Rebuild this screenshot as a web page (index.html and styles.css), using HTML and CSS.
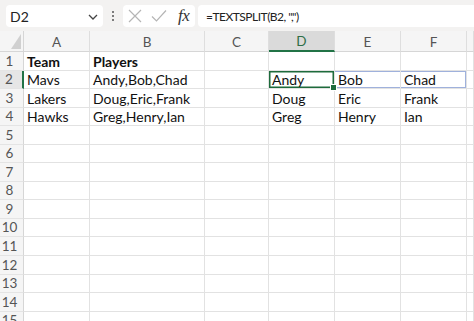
FILE: index.html
```html
<!DOCTYPE html>
<html>
<head>
<meta charset="utf-8">
<link rel="stylesheet" href="styles.css">
</head>
<body>
<div class="app">
  <div class="toolbar">
    <div class="namebox">
      <span class="ref">D2</span>
      <svg class="chev" width="10" height="6" viewBox="0 0 10 6"><path d="M1 1 L5 5 L9 1" fill="none" stroke="#444" stroke-width="1.3"/></svg>
    </div>
    <div class="dots"><i></i><i></i><i></i></div>
    <div class="fxbox">
      <svg width="14" height="14" viewBox="0 0 14 14"><path d="M1 1 L13 13 M13 1 L1 13" stroke="#b5b5b5" stroke-width="1.2" fill="none"/></svg>
      <svg width="16" height="14" viewBox="0 0 16 14"><path d="M1 7.5 L5.5 12 L15 1.5" stroke="#b5b5b5" stroke-width="1.2" fill="none"/></svg>
      <span class="fx">fx</span>
    </div>
    <div class="formula">=TEXTSPLIT(B2, ",")</div>
  </div>

  <div class="sheet">
    <div class="row head">
      <div class="corner"><svg width="10" height="15" viewBox="0 0 10 15"><path d="M10 0 L10 15 L0 15 Z" fill="#d0d0d0"/></svg></div>
      <div class="ch">A</div><div class="ch">B</div><div class="ch">C</div><div class="ch sel">D</div><div class="ch">E</div><div class="ch">F</div><div class="ch"></div>
    </div>
    <div class="row"><div class="rh">1</div><div class="c b">Team</div><div class="c b">Players</div><div class="c"></div><div class="c"></div><div class="c"></div><div class="c"></div><div class="c"></div></div>
    <div class="row"><div class="rh rsel">2</div><div class="c">Mavs</div><div class="c">Andy,Bob,Chad</div><div class="c"></div><div class="c active">Andy</div><div class="c spill">Bob</div><div class="c spill end">Chad</div><div class="c"></div></div>
    <div class="row"><div class="rh">3</div><div class="c">Lakers</div><div class="c">Doug,Eric,Frank</div><div class="c"></div><div class="c">Doug</div><div class="c">Eric</div><div class="c">Frank</div><div class="c"></div></div>
    <div class="row"><div class="rh">4</div><div class="c">Hawks</div><div class="c">Greg,Henry,Ian</div><div class="c"></div><div class="c">Greg</div><div class="c">Henry</div><div class="c">Ian</div><div class="c"></div></div>
    <div class="row"><div class="rh">5</div><div class="c"></div><div class="c"></div><div class="c"></div><div class="c"></div><div class="c"></div><div class="c"></div><div class="c"></div></div>
    <div class="row"><div class="rh">6</div><div class="c"></div><div class="c"></div><div class="c"></div><div class="c"></div><div class="c"></div><div class="c"></div><div class="c"></div></div>
    <div class="row"><div class="rh">7</div><div class="c"></div><div class="c"></div><div class="c"></div><div class="c"></div><div class="c"></div><div class="c"></div><div class="c"></div></div>
    <div class="row"><div class="rh">8</div><div class="c"></div><div class="c"></div><div class="c"></div><div class="c"></div><div class="c"></div><div class="c"></div><div class="c"></div></div>
    <div class="row"><div class="rh">9</div><div class="c"></div><div class="c"></div><div class="c"></div><div class="c"></div><div class="c"></div><div class="c"></div><div class="c"></div></div>
    <div class="row"><div class="rh">10</div><div class="c"></div><div class="c"></div><div class="c"></div><div class="c"></div><div class="c"></div><div class="c"></div><div class="c"></div></div>
    <div class="row"><div class="rh">11</div><div class="c"></div><div class="c"></div><div class="c"></div><div class="c"></div><div class="c"></div><div class="c"></div><div class="c"></div></div>
    <div class="row"><div class="rh">12</div><div class="c"></div><div class="c"></div><div class="c"></div><div class="c"></div><div class="c"></div><div class="c"></div><div class="c"></div></div>
    <div class="row"><div class="rh">13</div><div class="c"></div><div class="c"></div><div class="c"></div><div class="c"></div><div class="c"></div><div class="c"></div><div class="c"></div></div>
    <div class="row"><div class="rh">14</div><div class="c"></div><div class="c"></div><div class="c"></div><div class="c"></div><div class="c"></div><div class="c"></div><div class="c"></div></div>
    <div class="row"><div class="rh">15</div><div class="c"></div><div class="c"></div><div class="c"></div><div class="c"></div><div class="c"></div><div class="c"></div><div class="c"></div></div>
  </div>
</div>
</body>
</html>
```
FILE: styles.css
```css
* { box-sizing: border-box; }
html, body { margin: 0; padding: 0; background: #fff; }
body { width: 474px; height: 321px; overflow: hidden; font-family: Lato, "Open Sans", sans-serif; color: #111; }

.toolbar {
  height: 31px;
  background: #f3f2f1;
  display: flex;
  align-items: flex-start;
  padding: 5px 0 0 6px;
}
.namebox {
  width: 97px;
  height: 22px;
  background: #fff;
  border-radius: 4px;
  display: flex;
  align-items: center;
  justify-content: space-between;
  padding: 0 5px 0 4px;
  font-size: 14px;
  color: #222;
}
.chev { margin-top: 1px; }
.dots {
  width: 20px;
  height: 22px;
  display: flex;
  flex-direction: column;
  align-items: center;
  justify-content: center;
  gap: 2px;
}
.dots i { display: block; width: 2px; height: 2px; background: #555; border-radius: 1px; }
.fxbox {
  width: 72px;
  height: 22px;
  background: #fff;
  border-radius: 4px;
  display: flex;
  align-items: center;
  padding-left: 5px;
  gap: 9px;
}
.fx {
  font-family: "Liberation Serif", "DejaVu Serif", serif;
  font-style: italic;
  font-size: 17px;
  color: #333;
  margin-left: 2px;
  letter-spacing: -0.5px;
}
.formula {
  flex: 1;
  height: 22px;
  margin-left: 3px;
  background: #fff;
  border-radius: 4px 0 0 4px;
  display: flex;
  align-items: center;
  padding-left: 8px;
  font-size: 12px;
  letter-spacing: -0.5px;
  color: #222;
}

.sheet { background: #fff; }
.row {
  display: grid;
  grid-template-columns: 24px 66px 115px 64px 66px 66px 66px 1fr;
  height: 18.56px;
}
.row.head { height: 21px; background: #f5f5f5; }

.corner {
  border-right: 1px solid #d6d6d6;
  border-bottom: 1px solid #d6d6d6;
  display: flex;
  align-items: flex-end;
  justify-content: flex-end;
  padding: 0 2px 2px 0;
}
.ch {
  border-right: 1px solid #dedede;
  border-bottom: 1px solid #d6d6d6;
  display: flex;
  align-items: center;
  justify-content: center;
  font-size: 13.5px;
  color: #555;
  padding-top: 1px;
}
.ch.sel {
  background: #dadada;
  color: #2f6e46;
  border-bottom: 2px solid #217346;
}
.rh {
  background: #f5f5f5;
  border-right: 1px solid #d6d6d6;
  border-bottom: 1px solid #e4e4e4;
  display: flex;
  align-items: flex-end;
  justify-content: center;
  font-size: 13.5px;
  color: #555;
  line-height: 17px;
  padding-right: 4px;
}
.rh.rsel { background: #e6e6e6; border-right: 2px solid #217346; }

.c {
  border-right: 1px solid #e2e2e2;
  border-bottom: 1px solid #e2e2e2;
  display: flex;
  align-items: flex-end;
  padding: 0 3px 0 3px;
  font-size: 14px;
  line-height: 17px;
  white-space: nowrap;
  color: #111;
  position: relative;
}
.c.b { font-weight: bold; }
.c.active {
  box-shadow: inset 0 0 0 1.5px #1e6b3c;
}
.c.active::after {
  content: "";
  position: absolute;
  right: -3px;
  bottom: -3px;
  width: 5px;
  height: 5px;
  background: #1e6b3c;
  border: 1px solid #fff;
  z-index: 2;
}
.c.spill { box-shadow: inset 0 1px 0 #9fb1dc, inset 0 -1px 0 #9fb1dc; }
.c.spill.end { box-shadow: inset 0 1px 0 #9fb1dc, inset 0 -1px 0 #9fb1dc, inset -1px 0 0 #9fb1dc; }
```
